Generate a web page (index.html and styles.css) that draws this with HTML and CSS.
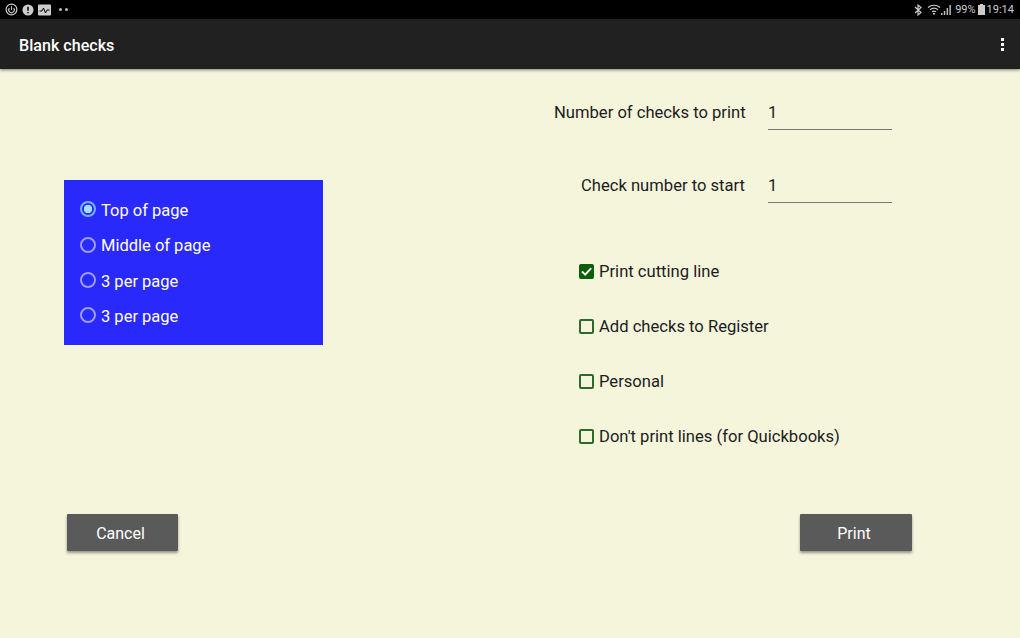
FILE: index.html
```html
<!DOCTYPE html>
<html><head>
<title>Blank checks</title>
<link rel="stylesheet" href="styles.css">
</head><body>
<div class="statusbar">
<div class="status-left">
<svg width="13" height="13" viewBox="0 0 14 14"><circle cx="7" cy="7" r="5.8" fill="none" stroke="#ccc" stroke-width="1.3"/><path d="M4.700 5.500a3 3 0 1 0 4.600 0" fill="none" stroke="#ccc" stroke-width="1.200"/><path d="M7 3.500v4" stroke="#ccc" stroke-width="1.2"/></svg>
<svg width="12" height="12" viewBox="0 0 13 13"><circle cx="6.5" cy="6.5" r="6" fill="#ccc"/><path d="M6.5 3v4.2M6.5 8.6v1.5" stroke="#000" stroke-width="1.6"/></svg>
<svg width="13" height="12" viewBox="0 0 13 12"><rect width="13" height="11" y="0.5" rx="1" fill="#ccc"/><path d="M1.5 7h2.5l1.5-3 2 5 1.5-3h2.5" fill="none" stroke="#000" stroke-width="1"/></svg>
<span class="dots"><i></i><i></i></span>
</div>
<div class="status-right">
<svg width="8" height="12" viewBox="0 0 8 12"><path d="M1 3l6 5.5L4 11V1l3 2.5L1 9" fill="none" stroke="#ccc" stroke-width="1.2"/></svg>
<svg class="wifi" width="14" height="11" viewBox="0 0 14 11"><path d="M1 3.5C4.5 .5 9.5 .5 13 3.5M3 5.7c2.500-2 5.500-2 8 0M5 7.900c1.300-1 2.700-1 4 0" fill="none" stroke="#ccc" stroke-width="1.1"/><circle cx="7" cy="9.800" r="1" fill="#ccc"/></svg>
<svg class="signal" width="10" height="10" viewBox="0 0 10 10"><path d="M0 8h1.500v2H0zM2.800 6h1.500v4H2.800zM5.600 3h1.500v7H5.600zM8.400 0h1.500v10H8.400z" fill="#bbb"/></svg>
<span class="status-text">99%</span>
<svg class="battery" width="7" height="11" viewBox="0 0 7 11"><path d="M2 0h3v1h2v10H0V1h2z" fill="#ccc"/></svg>
<span class="status-text">19:14</span>
</div>
</div>
<div class="toolbar">
<span class="toolbar-title">Blank checks</span>
<span class="menu"><i></i><i></i><i></i></span>
</div>
<div class="content">
<div class="upper">
<div class="left-col">
<div class="radios">
<div class="radio-row"><span class="radio checked"></span>Top of page</div>
<div class="radio-row"><span class="radio"></span>Middle of page</div>
<div class="radio-row"><span class="radio"></span>3 per page</div>
<div class="radio-row"><span class="radio"></span>3 per page</div>
</div>
</div>
<div class="right-col">
<div class="field"><span class="field-label">Number of checks to print</span><span class="field-input">1</span></div>
<div class="field"><span class="field-label">Check number to start</span><span class="field-input">1</span></div>
<div class="checks">
<div class="check-row"><span class="check checked"><svg width="15" height="15" viewBox="0 0 15 15"><path d="M3 7.500l3.200 3.200 6-6.500" fill="none" stroke="#fff" stroke-width="1.800"/></svg></span>Print cutting line</div>
<div class="check-row"><span class="check"></span>Add checks to Register</div>
<div class="check-row"><span class="check"></span>Personal</div>
<div class="check-row"><span class="check"></span>Don't print lines (for Quickbooks)</div>
</div>
</div>
</div>
<div class="buttons">
<div class="btn">Cancel</div>
<div class="btn btn-print">Print</div>
</div>
</div>
</body></html>
```

FILE: styles.css
```css
html, body {margin: 0; padding: 0;}
body {width: 1020px; height: 638px; overflow: hidden; background-color: #f5f5dc; color: #1c1c1c; font-family: Roboto, "Liberation Sans", sans-serif; font-size: 16.6px;}

.statusbar {height: 19px; background-color: #000; display: flex; justify-content: space-between; align-items: center; padding: 0 6px 0 5px;}
.status-left {display: flex; align-items: center; gap: 4px;}
.status-right {display: flex; align-items: center; gap: 3px;}
.status-text {color: #ccc; font-size: 11px;}
.dots {display: flex; gap: 3px; margin-left: 4px;}
.dots i {display: block; width: 3px; height: 3px; border-radius: 50%; background-color: #bbb;}
.wifi {margin-left: 2px;}
.signal {margin: 0 1px 0 -3px;}
.battery {margin: 0 -1px 0 -1px;}

.toolbar {height: 50px; background-color: #212121; display: flex; justify-content: space-between; align-items: center; padding: 2px 16px 0 19px; box-sizing: border-box; box-shadow: 0 1px 3px rgba(0,0,0,.5);}
.toolbar-title {color: #fff; font-size: 16.1px; font-weight: 500;}
.menu {display: flex; flex-direction: column; gap: 2px; margin-top: -2px;}
.menu i {display: block; width: 3px; height: 3px; background-color: #fff;}

.content {padding: 0 108px 0 64px;}
.upper {display: flex; justify-content: space-between; height: 445px;}
.left-col {padding-top: 111px;}
.radios {width: 259px; height: 165px; box-sizing: border-box; padding: 11.600px 0 0 16px; background-color: #2a29fb; color: #fff; font-size: 16.5px;}
.radio-row {display: flex; align-items: center; height: 35.400px; box-sizing: border-box; padding-top: 2px;}
.radio {width: 16px; height: 16px; box-sizing: border-box; margin: 0 5px 2px 0; border: 2px solid #9c9cfc; border-radius: 50%;}
.radio.checked {border-color: #6fb4fb; background: radial-gradient(circle, #a8dcfb 0, #a8dcfb 4px, #2a29fb 4.500px);}

.right-col {width: 358px; padding-top: 25px;}
.field {display: flex; height: 36px; margin-bottom: 37px;}
.field-label {width: 191px; line-height: 38px; text-align: right; white-space: nowrap;}
.field-input {width: 124px; margin-left: 23px; box-sizing: border-box; line-height: 38px; border-bottom: 1px solid #777;}

.checks {padding: 4px 0 0 25px;}
.check-row {display: flex; align-items: center; height: 55px;}
.check {width: 15px; height: 15px; box-sizing: border-box; margin-right: 5px; border: 2px solid #2b6b2b; border-radius: 2px; flex: none;}
.check svg {display: block; margin: -2px;}
.check.checked {background-color: #0b5f0b; border-color: #0b5f0b;}

.buttons {display: flex; justify-content: space-between; padding-left: 3px;}
.btn {width: 111px; height: 37px; box-sizing: border-box; padding-right: 4px; font-size: 16px; line-height: 39px; text-align: center; background-color: #5a5a5a; color: #fff; box-shadow: 0 2px 3px rgba(0,0,0,.4); border-radius: 1px;}
.btn-print {width: 112px;}
```
